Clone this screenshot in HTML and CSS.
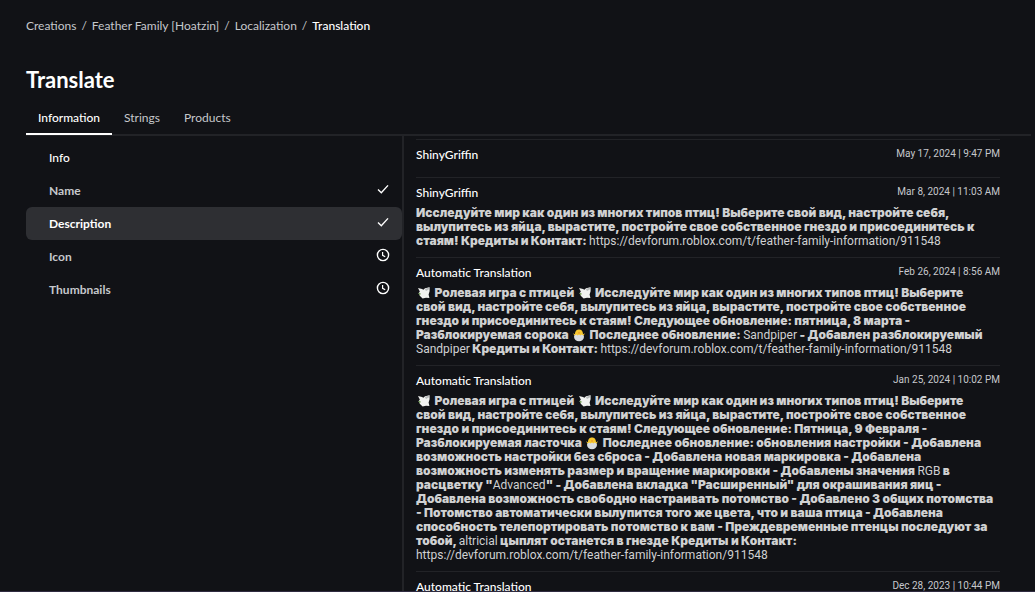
FILE: index.html
```
<!DOCTYPE html>
<html lang="en">
<head>
  <meta charset="UTF-8">
  <title>Translate</title>
  <link rel="stylesheet" href="styles.css">
</head>
<body>

<!-- icons -->
<svg class="sprite" aria-hidden="true">
  <symbol id="check" viewBox="0 0 14 14">
    <path d="M2 7.6 L5.3 10.7 L12 3.4" fill="none" stroke="currentColor" stroke-width="1.4"/>
  </symbol>
  <symbol id="clock" viewBox="0 0 14 14">
    <circle cx="7" cy="7" r="5.6" fill="none" stroke="currentColor" stroke-width="1.4"/>
    <path d="M6.6 4 V7.4 L9.2 8.8" fill="none" stroke="currentColor" stroke-width="1.2"/>
  </symbol>
  <symbol id="dove" viewBox="0 0 14 14">
    <path d="M1 2 L5 3 L6.4 3.8 L8 2.2 L12.6 1.2 L12.6 5.2 L11.6 8.4 L12.4 12 L9 11.8 L5.6 12.4 L3 10 L1.6 7.4 L2.8 5.4 Z" fill="#f1f2f0"/>
    <path d="M7.8 3 L12.4 1.2 L11.8 3.6 L9 5 Z" fill="#b9bcbd"/>
    <path d="M1.2 6.8 L3.8 7.4 L2.8 9.6 Z" fill="#6f9b51"/>
  </symbol>
  <symbol id="chick" viewBox="0 0 14 14">
    <ellipse cx="7" cy="8.8" rx="5" ry="4.4" fill="#d9dce0"/>
    <path d="M3 6.2 C3 2.8 5 1.6 7 1.6 C9 1.6 11 2.8 11 6.2 L13 5.2 L11.6 7.4 L9.6 6.6 L8.3 7.6 L7 6.6 L5.7 7.6 L4.4 6.6 L2.4 7.4 L1 5.2 Z" fill="#f6c62e"/>
    <path d="M6 4.6 H8 L7 6 Z" fill="#e2802c"/>
  </symbol>
</svg>

<div class="page">
  <nav class="breadcrumb" aria-label="Breadcrumb">
    <a href="#">Creations</a><span>/</span>
    <a href="#">Feather Family [Hoatzin]</a><span>/</span>
    <a href="#">Localization</a><span>/</span>
    <a href="#" class="current">Translation</a>
  </nav>

  <h1>Translate</h1>

  <div class="tabs" role="tablist">
    <button class="tab active" role="tab" aria-selected="true">Information</button>
    <button class="tab" role="tab">Strings</button>
    <button class="tab" role="tab">Products</button>
  </div>

  <div class="content">
    <aside class="sidebar">
      <h2>Info</h2>
      <button class="item">Name <svg class="status"><use href="#check"/></svg></button>
      <button class="item selected">Description <svg class="status"><use href="#check"/></svg></button>
      <button class="item">Icon <svg class="status"><use href="#clock"/></svg></button>
      <button class="item">Thumbnails <svg class="status"><use href="#clock"/></svg></button>
    </aside>

    <main class="history">
      <article class="entry">
        <header><h3>ShinyGriffin</h3><time>May 17, 2024 | 9:47 PM</time></header>
      </article>

      <article class="entry">
        <header><h3>ShinyGriffin</h3><time>Mar 8, 2024 | 11:03 AM</time></header>
        <p lang="ru">Исследуйте мир как один из многих типов птиц! Выберите свой вид, настройте себя, вылупитесь из яйца, вырастите, постройте свое собственное гнездо и присоединитесь к стаям! Кредиты и Контакт: <span lang="en">https://devforum.roblox.com/t/feather-family-information/911548</span></p>
      </article>

      <article class="entry">
        <header><h3>Automatic Translation</h3><time>Feb 26, 2024 | 8:56 AM</time></header>
        <p lang="ru"><svg class="emoji"><use href="#dove"/></svg> Ролевая игра с птицей <svg class="emoji"><use href="#dove"/></svg> Исследуйте мир как один из многих типов птиц! Выберите свой вид, настройте себя, вылупитесь из яйца, вырастите, постройте свое собственное гнездо и присоединитесь к стаям! Следующее обновление: пятница, 8 марта - Разблокируемая сорока <svg class="emoji"><use href="#chick"/></svg> Последнее обновление: <span lang="en">Sandpiper</span> - Добавлен разблокируемый <span lang="en">Sandpiper</span> Кредиты и Контакт: <span lang="en">https://devforum.roblox.com/t/feather-family-information/911548</span></p>
      </article>

      <article class="entry">
        <header><h3>Automatic Translation</h3><time>Jan 25, 2024 | 10:02 PM</time></header>
        <p lang="ru"><svg class="emoji"><use href="#dove"/></svg> Ролевая игра с птицей <svg class="emoji"><use href="#dove"/></svg> Исследуйте мир как один из многих типов птиц! Выберите свой вид, настройте себя, вылупитесь из яйца, вырастите, постройте свое собственное гнездо и присоединитесь к стаям! Следующее обновление: Пятница, 9 Февраля - Разблокируемая ласточка <svg class="emoji"><use href="#chick"/></svg> Последнее обновление: обновления настройки - Добавлена возможность настройки без сброса - Добавлена новая маркировка - Добавлена возможность изменять размер и вращение маркировки - Добавлены значения <span lang="en">RGB</span> в расцветку "<span lang="en">Advanced</span>" - Добавлена вкладка "Расширенный" для окрашивания яиц - Добавлена возможность свободно настраивать потомство - Добавлено 3 общих потомства - Потомство автоматически вылупится того же цвета, что и ваша птица - Добавлена способность телепортировать потомство к вам - Преждевременные птенцы последуют за тобой, <span lang="en">altricial</span> цыплят останется в гнезде Кредиты и Контакт: <span lang="en">https://devforum.roblox.com/t/feather-family-information/911548</span></p>
      </article>

      <article class="entry">
        <header><h3>Automatic Translation</h3><time>Dec 28, 2023 | 10:44 PM</time></header>
      </article>
    </main>
  </div>
</div>

</body>
</html>
```
FILE: styles.css
```
* { box-sizing: border-box; }
body { margin: 0; background: #111216; color: #fff; font-family: Lato, "Noto Sans", sans-serif; font-size: 12px; line-height: 18px; }
h1, h2, h3, p { margin: 0; font-size: 12px; font-weight: 500; }
button { background: none; border: 0; color: inherit; font: inherit; cursor: pointer; }
.sprite { display: none; }

.page { display: flex; flex-direction: column; height: 100vh; overflow: hidden; padding: 17px 4px 0 26px; border-bottom: 1px solid #2f2b40; }

.breadcrumb { display: flex; gap: 5px; color: #c6c8cc; }
.breadcrumb a { color: inherit; text-decoration: none; }
.breadcrumb .current { color: #fff; font-weight: 500; }

h1 { margin-top: 31px; font-size: 22px; font-weight: 700; line-height: 28px; }

.tabs { display: flex; flex-shrink: 0; margin-top: 8px; border-bottom: 2px solid #222327; }
.tab { height: 33px; margin-bottom: -1px; padding: 0 12px; border-bottom: 2px solid transparent; color: #c6c8cc; }
.tab.active { border-color: #fff; color: #fff; font-weight: 500; }

.content { display: flex; flex: 1; min-height: 0; }
.sidebar { flex: 0 0 378px; padding-top: 5px; border-right: 2px solid #222327; }
.sidebar h2 { padding: 8px 23px; line-height: 17px; }
.item { display: flex; align-items: center; justify-content: space-between; width: 100%; height: 33px; padding: 0 12px 0 23px; border-radius: 6px; color: #c6c8cc; font-weight: 700; }
.item.selected { background: #2e2f33; color: #fff; }
.status { width: 14px; height: 14px; margin-bottom: 4px; color: #fff; }

.history { flex: 1; overflow: hidden; padding: 3px 31px 0 12px; }
.entry { padding: 6px 0 9px; border-top: 1px solid #222327; }
.entry header { display: flex; justify-content: space-between; margin-bottom: 4px; }
.entry time { color: #c6c8cc; font-family: Roboto, "Noto Sans", sans-serif; font-size: 10px; line-height: 16px; }
.entry p { padding-right: 5px; color: #d0d1d2; font-family: Inter, "Noto Sans", sans-serif; font-weight: 900; line-height: 14px; }
.entry p span { font-family: Roboto, "Noto Sans", sans-serif; font-weight: 400; }
.emoji { width: 14px; height: 14px; margin: 0 1px; vertical-align: -3px; }
```
